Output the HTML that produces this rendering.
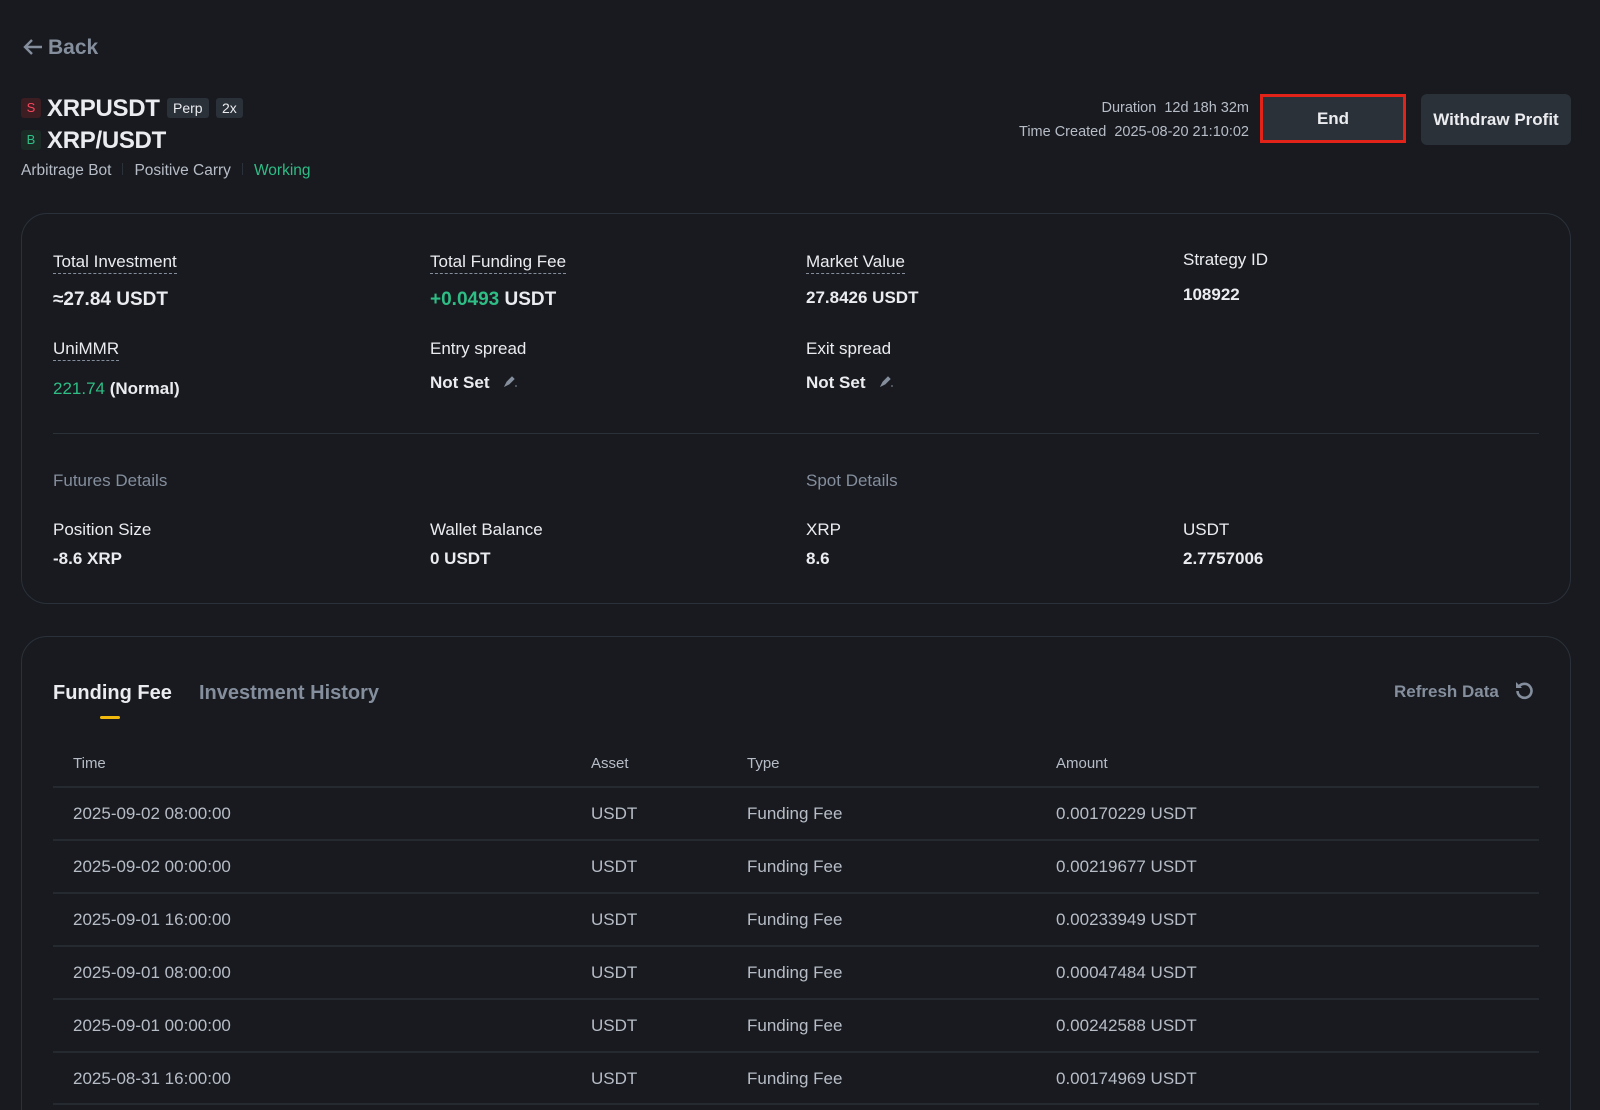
<!DOCTYPE html>
<html><head><meta charset="utf-8"><style>
*{box-sizing:border-box;margin:0;padding:0}
html{width:1600px;height:1110px;overflow:hidden}
body{width:1600px;height:1110px;background:#181a20;font-family:"Liberation Sans",sans-serif;color:#eaecef;position:relative;overflow:hidden}
.a{position:absolute;white-space:nowrap}
.g{color:#848e9c}
.gr{color:#2ebd85}
.lbl{font-size:17px;color:#eaecef}
.dot{border-bottom:1px dashed #848e9c;padding-bottom:2px}
.val{font-size:18px;font-weight:bold;color:#eaecef}
.card{position:absolute;border:1px solid #2b3139;border-radius:26px}
.th{font-size:15px;color:#b7bdc6}
.td{font-size:17px;color:#b7bdc6}
.line{position:absolute;left:53px;width:1486px;height:2px;background:#242a30}
</style></head><body>
<div class="a g" style="left:22px;top:36px;font-size:21px;font-weight:bold">
<svg width="22" height="18" viewBox="0 0 22 18" style="vertical-align:-2px;margin-right:4px"><path d="M20 9H3M10 2L3 9l7 7" stroke="#848e9c" stroke-width="2.4" fill="none"/></svg>Back</div>

<div class="a" style="left:21px;top:98px;width:20px;height:20px;background:#3c1d22;border-radius:3px;color:#f6465d;font-size:13px;text-align:center;line-height:20px">S</div>
<div class="a" style="left:47px;top:95px;font-size:24px;font-weight:bold;letter-spacing:-0.3px">XRPUSDT</div>
<div class="a" style="left:167px;top:98px;height:20px;padding:0 6px;background:#2b3139;border-radius:3px;font-size:14px;line-height:20px">Perp</div>
<div class="a" style="left:216px;top:98px;height:20px;padding:0 6px;background:#2b3139;border-radius:3px;font-size:14px;line-height:20px">2x</div>
<div class="a" style="left:21px;top:130px;width:20px;height:20px;background:#1b2a25;border-radius:3px;color:#2ebd85;font-size:13px;text-align:center;line-height:20px">B</div>
<div class="a" style="left:47px;top:127px;font-size:24px;font-weight:bold;letter-spacing:-0.3px">XRP/USDT</div>
<div class="a" style="left:21px;top:162px;font-size:15.5px;color:#b7bdc6">Arbitrage Bot<span style="display:inline-block;width:1px;height:12px;background:#2b3139;margin:0 11px"></span>Positive Carry<span style="display:inline-block;width:1px;height:12px;background:#2b3139;margin:0 11px"></span><span class="gr">Working</span></div>

<div class="a" style="right:351px;top:96px;font-size:14.5px;color:#b7bdc6;text-align:right;line-height:24px">Duration&nbsp; 12d 18h 32m<br>Time Created&nbsp; 2025-08-20 21:10:02</div>
<div class="a" style="left:1260px;top:94px;width:146px;height:49px;border:3px solid #e2231a;background:#2b3139;font-size:17px;font-weight:bold;text-align:center;line-height:43px">End</div>
<div class="a" style="left:1421px;top:94px;width:150px;height:51px;background:#2b3139;border-radius:6px;font-size:17px;font-weight:bold;text-align:center;line-height:51px">Withdraw Profit</div>

<div class="card" style="left:21px;top:213px;width:1550px;height:391px"></div>
<div class="a lbl" style="left:53px;top:252px"><span class="dot">Total Investment</span></div>
<div class="a val" style="left:53px;top:289px;font-size:19px">≈27.84 USDT</div>
<div class="a lbl" style="left:430px;top:252px"><span class="dot">Total Funding Fee</span></div>
<div class="a val" style="left:430px;top:289px;font-size:19px"><span class="gr">+0.0493</span> USDT</div>
<div class="a lbl" style="left:806px;top:252px"><span class="dot">Market Value</span></div>
<div class="a val" style="left:806px;top:288px;font-size:17px">27.8426 USDT</div>
<div class="a lbl" style="left:1183px;top:250px">Strategy ID</div>
<div class="a val" style="left:1183px;top:285px;font-size:17px">108922</div>

<div class="a lbl" style="left:53px;top:339px"><span class="dot">UniMMR</span></div>
<div class="a val" style="left:53px;top:379px;font-size:17px"><span class="gr" style="font-weight:normal">221.74</span> (Normal)</div>
<div class="a lbl" style="left:430px;top:339px">Entry spread</div>
<div class="a val" style="left:430px;top:373px;font-size:17px">Not Set <svg width="14" height="14" viewBox="0 0 14 14" style="margin-left:10px"><path d="M1 12l2-4 5-5 2 2-5 5z M11 12h2" fill="#848e9c" stroke="#848e9c"/></svg></div>
<div class="a lbl" style="left:806px;top:339px">Exit spread</div>
<div class="a val" style="left:806px;top:373px;font-size:17px">Not Set <svg width="14" height="14" viewBox="0 0 14 14" style="margin-left:10px"><path d="M1 12l2-4 5-5 2 2-5 5z M11 12h2" fill="#848e9c" stroke="#848e9c"/></svg></div>

<div class="a" style="left:53px;top:433px;width:1486px;height:1px;background:#2b3139"></div>
<div class="a g" style="left:53px;top:471px;font-size:17px">Futures Details</div>
<div class="a g" style="left:806px;top:471px;font-size:17px">Spot Details</div>
<div class="a lbl" style="left:53px;top:520px">Position Size</div>
<div class="a val" style="left:53px;top:549px;font-size:17px">-8.6 XRP</div>
<div class="a lbl" style="left:430px;top:520px">Wallet Balance</div>
<div class="a val" style="left:430px;top:549px;font-size:17px">0 USDT</div>
<div class="a lbl" style="left:806px;top:520px">XRP</div>
<div class="a val" style="left:806px;top:549px;font-size:17px">8.6</div>
<div class="a lbl" style="left:1183px;top:520px">USDT</div>
<div class="a val" style="left:1183px;top:549px;font-size:17px">2.7757006</div>

<div class="card" style="left:21px;top:636px;width:1550px;height:500px"></div>
<div class="a" style="left:53px;top:682px;font-size:20px;font-weight:bold">Funding Fee</div>
<div class="a" style="left:100px;top:716px;width:20px;height:3px;background:#f0b90b;border-radius:2px"></div>
<div class="a g" style="left:199px;top:682px;font-size:20px;font-weight:bold">Investment History</div>
<div class="a g" style="left:1394px;top:680px;font-size:17px;font-weight:bold">Refresh Data
<svg width="20" height="20" viewBox="0 0 20 20" style="vertical-align:-3px;margin-left:10px"><path d="M5 6.5A7 7 0 1 1 3.5 11" stroke="#848e9c" stroke-width="2.6" fill="none"/><path d="M2 2v6h6z" fill="#848e9c"/></svg></div>

<div class="a th" style="left:73px;top:755px">Time</div>
<div class="a th" style="left:591px;top:755px">Asset</div>
<div class="a th" style="left:747px;top:755px">Type</div>
<div class="a th" style="left:1056px;top:755px">Amount</div>
<div class="line" style="top:786px"></div>

<div class="a td" style="left:73px;top:804px">2025-09-02 08:00:00</div><div class="a td" style="left:591px;top:804px">USDT</div><div class="a td" style="left:747px;top:804px">Funding Fee</div><div class="a td" style="left:1056px;top:804px">0.00170229 USDT</div>
<div class="line" style="top:839px"></div>
<div class="a td" style="left:73px;top:857px">2025-09-02 00:00:00</div><div class="a td" style="left:591px;top:857px">USDT</div><div class="a td" style="left:747px;top:857px">Funding Fee</div><div class="a td" style="left:1056px;top:857px">0.00219677 USDT</div>
<div class="line" style="top:892px"></div>
<div class="a td" style="left:73px;top:910px">2025-09-01 16:00:00</div><div class="a td" style="left:591px;top:910px">USDT</div><div class="a td" style="left:747px;top:910px">Funding Fee</div><div class="a td" style="left:1056px;top:910px">0.00233949 USDT</div>
<div class="line" style="top:945px"></div>
<div class="a td" style="left:73px;top:963px">2025-09-01 08:00:00</div><div class="a td" style="left:591px;top:963px">USDT</div><div class="a td" style="left:747px;top:963px">Funding Fee</div><div class="a td" style="left:1056px;top:963px">0.00047484 USDT</div>
<div class="line" style="top:998px"></div>
<div class="a td" style="left:73px;top:1016px">2025-09-01 00:00:00</div><div class="a td" style="left:591px;top:1016px">USDT</div><div class="a td" style="left:747px;top:1016px">Funding Fee</div><div class="a td" style="left:1056px;top:1016px">0.00242588 USDT</div>
<div class="line" style="top:1051px"></div>
<div class="a td" style="left:73px;top:1069px">2025-08-31 16:00:00</div><div class="a td" style="left:591px;top:1069px">USDT</div><div class="a td" style="left:747px;top:1069px">Funding Fee</div><div class="a td" style="left:1056px;top:1069px">0.00174969 USDT</div>
<div class="line" style="top:1103px"></div>
</body></html>
